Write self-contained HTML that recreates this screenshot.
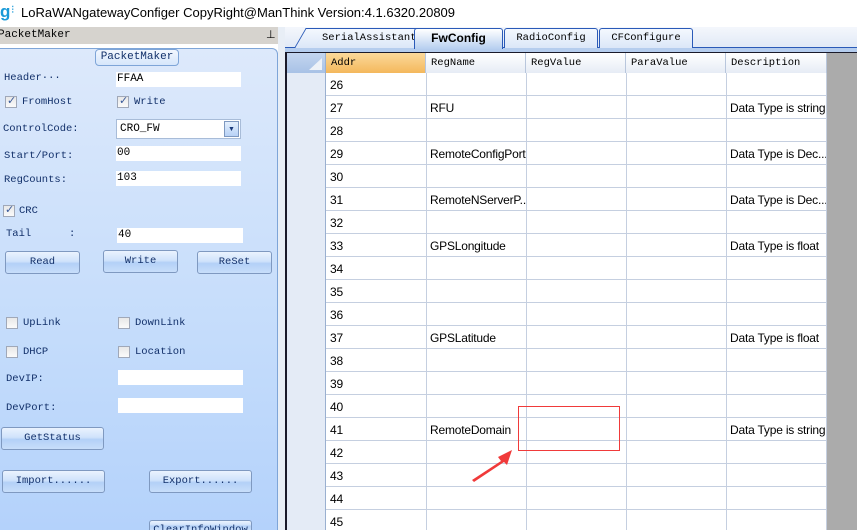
<!DOCTYPE html>
<html style="width:857px;height:530px;overflow:hidden"><head><meta charset="utf-8"><style>
*{margin:0;padding:0;box-sizing:border-box}
body{width:857px;height:530px;overflow:hidden;background:#fff;position:relative;font-family:"Liberation Sans",sans-serif}
.a{position:absolute}
.m{font-family:"Liberation Mono",monospace;font-size:10.5px;color:#12306a;white-space:nowrap}
.in{position:absolute;background:#fff;height:15px;font-family:"Liberation Mono",monospace;font-size:11px;color:#000;padding-left:1px;line-height:15px}
.cb{position:absolute;width:12px;height:12px;border:1px solid #a0a8b8;background:linear-gradient(#e8e8e8,#fafafa)}
.cb.c::after{content:"✓";position:absolute;left:1px;top:-3px;font-size:11px;color:#3a5a9a}
.btn{position:absolute;height:23px;border:1px solid #7f99c0;border-radius:3px;background:linear-gradient(#eaf3fe 0%,#cfe2fb 45%,#b3d0f7 55%,#c8defa 100%);text-align:center;line-height:20px;font-family:"Liberation Mono",monospace;font-size:10.5px;color:#12306a;overflow:hidden}
.row{position:absolute;left:287px;width:540px;height:23px;border-bottom:1px solid #c5cfe0}
.row .h{position:absolute;left:0;top:0;width:39px;height:23px;background:#e4ebf6;border-right:1px solid #9ab0d0}
.row span{position:absolute;top:5px;font-size:12px;color:#000;white-space:nowrap;overflow:hidden;width:97px;letter-spacing:-0.2px}
.vl{position:absolute;top:73px;width:1px;height:457px;background:#c5cfe0}
.hc{position:absolute;top:53px;height:20px;border-right:1px solid #b8c6dc;background:linear-gradient(#fff,#e6ecf5);font-family:"Liberation Mono",monospace;font-size:10.5px;line-height:20px;padding-left:5px;color:#000}
.tab{position:absolute;top:28px;height:20px;border:1px solid #2a5ab8;border-bottom:none;border-radius:3px 3px 0 0;background:linear-gradient(#f4f8fe,#dbe7f8);font-family:"Liberation Mono",monospace;font-size:10.5px;text-align:center;line-height:19px}
</style></head><body>
<div class="a" style="left:0;top:0;width:857px;height:27px;background:#fff"></div>
<div class="a" style="left:0;top:2px;font-size:17px;color:#1a9ad8;font-weight:bold">g</div>
<div class="a" style="left:11px;top:3px;font-size:11px;color:#1a9ad8">⁝</div>
<div class="a" style="left:21px;top:5px;font-size:13px;color:#000;white-space:nowrap">LoRaWANgatewayConfiger CopyRight@ManThink Version:4.1.6320.20809</div>

<div class="a" style="left:0;top:27px;width:280px;height:17px;background:#d6d3ce"></div>
<div class="a m" style="left:-2px;top:29px;color:#000;font-size:11px">PacketMaker</div>
<div class="a" style="left:266px;top:28px;font-size:11px;color:#000">⊥</div>
<div class="a" style="left:0;top:44px;width:280px;height:486px;background:#fff"></div>
<div class="a" style="left:0;top:48px;width:278px;height:482px;background:linear-gradient(#dde9fb,#c4dcfb 60%,#b4d2fb);border:1px solid #7ea5d8;border-left:none;border-bottom:none;border-radius:0 6px 0 0"></div>
<div class="a" style="left:278px;top:27px;width:7px;height:503px;background:#e8eef6"></div>
<div class="a m" style="left:95px;top:49px;width:84px;height:17px;border:1px solid #7ea5d8;border-radius:4px;background:linear-gradient(#f2f7fe,#d6e6fb);text-align:center;line-height:14px;font-size:11px">PacketMaker</div>

<div class="a m" style="left:4px;top:72px">Header···</div>
<div class="in" style="left:116px;top:72px;width:125px">FFAA</div>
<div class="cb c" style="left:5px;top:96px"></div><div class="a m" style="left:22px;top:96px">FromHost</div>
<div class="cb c" style="left:117px;top:96px"></div><div class="a m" style="left:134px;top:96px">Write</div>
<div class="a m" style="left:3px;top:123px">ControlCode:</div>
<div class="a" style="left:116px;top:119px;width:125px;height:20px;background:#fff;border:1px solid #a8bcd8"></div>
<div class="a" style="left:120px;top:123px;font-family:'Liberation Mono',monospace;font-size:11px">CRO_FW</div>
<div class="a" style="left:224px;top:121px;width:15px;height:16px;border:1px solid #7f99c0;background:linear-gradient(#e4effd,#b8d2f6);font-size:7px;text-align:center;line-height:15px;color:#1b3a7a">▼</div>
<div class="a m" style="left:4px;top:150px">Start/Port:</div>
<div class="in" style="left:116px;top:146px;width:125px">00</div>
<div class="a m" style="left:4px;top:174px">RegCounts:</div>
<div class="in" style="left:116px;top:171px;width:125px">103</div>
<div class="cb c" style="left:3px;top:205px"></div><div class="a m" style="left:19px;top:205px">CRC</div>
<div class="a m" style="left:6px;top:228px">Tail&nbsp;&nbsp;&nbsp;&nbsp;&nbsp;&nbsp;:</div>
<div class="in" style="left:117px;top:228px;width:126px">40</div>
<div class="btn" style="left:5px;top:251px;width:75px">Read</div>
<div class="btn" style="left:103px;top:250px;width:75px">Write</div>
<div class="btn" style="left:197px;top:251px;width:75px">ReSet</div>
<div class="cb" style="left:6px;top:317px"></div><div class="a m" style="left:23px;top:317px">UpLink</div>
<div class="cb" style="left:118px;top:317px"></div><div class="a m" style="left:135px;top:317px">DownLink</div>
<div class="cb" style="left:6px;top:346px"></div><div class="a m" style="left:23px;top:346px">DHCP</div>
<div class="cb" style="left:118px;top:346px"></div><div class="a m" style="left:135px;top:346px">Location</div>
<div class="a m" style="left:6px;top:373px">DevIP:</div>
<div class="in" style="left:118px;top:370px;width:125px"></div>
<div class="a m" style="left:6px;top:402px">DevPort:</div>
<div class="in" style="left:118px;top:398px;width:125px"></div>
<div class="btn" style="left:1px;top:427px;width:103px">GetStatus</div>
<div class="btn" style="left:2px;top:470px;width:103px">Import......</div>
<div class="btn" style="left:149px;top:470px;width:103px">Export......</div>
<div class="btn" style="left:149px;top:520px;width:103px;height:10px;border-bottom:none;border-radius:3px 3px 0 0;line-height:18px">ClearInfoWindow</div>

<div class="a" style="left:285px;top:27px;width:572px;height:22px;background:linear-gradient(#f4f7fc,#dfe8f6)"></div>
<div class="a" style="left:285px;top:47px;width:572px;height:6px;background:#b5cdee;border-top:1px solid #2a5ab8"></div>
<div class="a" style="left:300px;top:28px;width:120px;height:20px;border-top:1px solid #2a5ab8;background:linear-gradient(#f4f8fe,#dbe7f8);transform:skewX(-30deg);border-left:1px solid #2a5ab8"></div>
<div class="a" style="left:322px;top:32px;font-family:'Liberation Mono',monospace;font-size:10.5px">SerialAssistant</div>
<div class="tab" style="left:414px;width:89px;background:linear-gradient(#fff,#b7cff0);font-family:'Liberation Sans',sans-serif;font-weight:bold;font-size:12px;height:21px">FwConfig</div>
<div class="tab" style="left:504px;width:94px">RadioConfig</div>
<div class="tab" style="left:599px;width:94px">CFConfigure</div>

<div class="a" style="left:285px;top:52px;width:2px;height:478px;background:#1a1a2a"></div>
<div class="a" style="left:287px;top:52px;width:570px;height:1px;background:#1a1a2a"></div>
<div class="a" style="left:287px;top:53px;width:540px;height:477px;background:#fff"></div>
<div class="a" style="left:827px;top:53px;width:30px;height:477px;background:#ababab"></div>
<div class="a" style="left:287px;top:53px;width:39px;height:20px;background:linear-gradient(#c4d6ef,#a8c2e6);border-right:1px solid #9ab0d0"></div>
<div class="a" style="left:309px;top:58px;width:0;height:0;border-left:13px solid transparent;border-bottom:12px solid #eef2f8"></div>
<div class="hc" style="left:326px;width:100px;background:linear-gradient(#fbd99a,#f4b85c)">Addr</div>
<div class="hc" style="left:426px;width:100px">RegName</div>
<div class="hc" style="left:526px;width:100px">RegValue</div>
<div class="hc" style="left:626px;width:100px">ParaValue</div>
<div class="hc" style="left:726px;width:101px">Description</div>

<div class="row" style="top:73px"><div class="h"></div><span style="left:43px">26</span></div>
<div class="row" style="top:96px"><div class="h"></div><span style="left:43px">27</span><span style="left:143px">RFU</span><span style="left:443px">Data Type is string</span></div>
<div class="row" style="top:119px"><div class="h"></div><span style="left:43px">28</span></div>
<div class="row" style="top:142px"><div class="h"></div><span style="left:43px">29</span><span style="left:143px">RemoteConfigPort</span><span style="left:443px">Data Type is Dec...</span></div>
<div class="row" style="top:165px"><div class="h"></div><span style="left:43px">30</span></div>
<div class="row" style="top:188px"><div class="h"></div><span style="left:43px">31</span><span style="left:143px">RemoteNServerP...</span><span style="left:443px">Data Type is Dec...</span></div>
<div class="row" style="top:211px"><div class="h"></div><span style="left:43px">32</span></div>
<div class="row" style="top:234px"><div class="h"></div><span style="left:43px">33</span><span style="left:143px">GPSLongitude</span><span style="left:443px">Data Type is float</span></div>
<div class="row" style="top:257px"><div class="h"></div><span style="left:43px">34</span></div>
<div class="row" style="top:280px"><div class="h"></div><span style="left:43px">35</span></div>
<div class="row" style="top:303px"><div class="h"></div><span style="left:43px">36</span></div>
<div class="row" style="top:326px"><div class="h"></div><span style="left:43px">37</span><span style="left:143px">GPSLatitude</span><span style="left:443px">Data Type is float</span></div>
<div class="row" style="top:349px"><div class="h"></div><span style="left:43px">38</span></div>
<div class="row" style="top:372px"><div class="h"></div><span style="left:43px">39</span></div>
<div class="row" style="top:395px"><div class="h"></div><span style="left:43px">40</span></div>
<div class="row" style="top:418px"><div class="h"></div><span style="left:43px">41</span><span style="left:143px">RemoteDomain</span><span style="left:443px">Data Type is string</span></div>
<div class="row" style="top:441px"><div class="h"></div><span style="left:43px">42</span></div>
<div class="row" style="top:464px"><div class="h"></div><span style="left:43px">43</span></div>
<div class="row" style="top:487px"><div class="h"></div><span style="left:43px">44</span></div>
<div class="row" style="top:510px"><div class="h"></div><span style="left:43px">45</span></div>
<div class="vl" style="left:426px"></div><div class="vl" style="left:526px"></div><div class="vl" style="left:626px"></div><div class="vl" style="left:726px"></div><div class="vl" style="left:826px"></div>

<div class="a" style="left:518px;top:406px;width:102px;height:45px;border:1px solid #f03a3a"></div>
<svg class="a" style="left:465px;top:445px" width="55" height="40"><path d="M7 35 L36 16 L33 12 L47 5 L42 20 L39 17 L9 37 Z" fill="#f03a3a"/></svg>
</body></html>
